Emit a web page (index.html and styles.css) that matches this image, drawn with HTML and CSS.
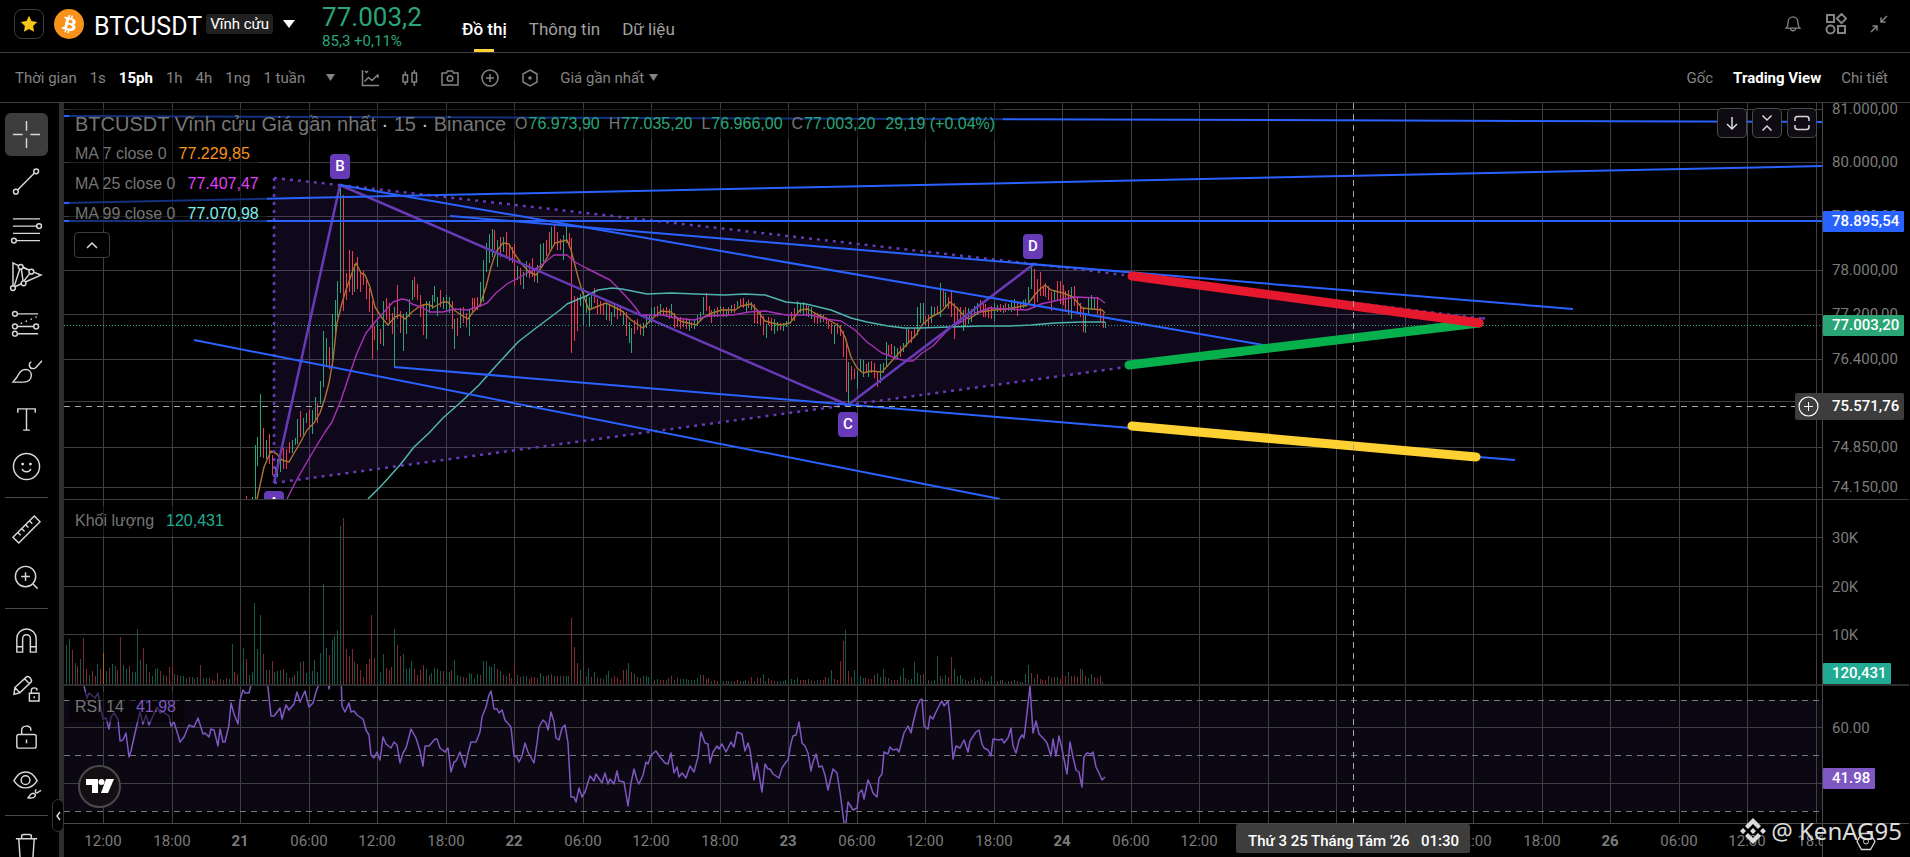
FILE: index.html
```html
<!DOCTYPE html>
<html lang="vi">
<head>
    <meta charset="UTF-8">
    <meta name="viewport" content="width=device-width, initial-scale=1.0">
    <title>BTCUSDT Vĩnh cửu</title>
    <link rel="stylesheet" href="styles.css">
</head>
<body>
    <header class="header">
        <button class="fav" type="button" aria-label="Yêu thích">
            <svg width="18" height="18" viewBox="0 0 18 18"><path d="M9 .8l2.5 5.3 5.7.8-4.1 4.1 1 5.8L9 14l-5.1 2.8 1-5.8L.8 6.9l5.7-.8z" fill="#f5c518"/></svg>
        </button>
        <svg class="coin" width="30" height="30" viewBox="0 0 32 32">
            <circle cx="16" cy="16" r="16" fill="#f7931a"/>
            <path fill="#fff" d="M23.2 14c.3-2.1-1.3-3.2-3.5-4l.7-2.8-1.7-.4-.7 2.8-1.4-.3.7-2.8-1.7-.4-.7 2.8-1.1-.3-2.4-.6-.4 1.9 1.2.3c.7.2.8.6.8 1l-.8 3.2-1.1 4.5c-.1.2-.3.5-.8.4l-1.2-.3-.9 2 3.5.9-.7 2.9 1.7.4.7-2.9 1.4.4-.7 2.8 1.7.4.7-2.8c2.9.6 5.2.3 6.1-2.3.8-2.1 0-3.4-1.6-4.2 1.1-.3 2-1 2.2-2.6zm-3.9 5.5c-.6 2.1-4.1 1-5.3.7l.9-3.8c1.2.3 4.9.9 4.4 3.1zm.5-5.500c-.5 1.900-3.400.9-4.400.7l.9-3.500c1 .2 4 .7 3.500 2.800z"/>
        </svg>
        <h1 class="symbol">BTCUSDT</h1>
        <span class="badge">Vĩnh cửu</span>
        <button class="plain" type="button" aria-label="Chọn cặp">
            <svg width="12" height="8" viewBox="0 0 12 8"><path d="M0 0h12L6 8z" fill="#fff"/></svg>
        </button>
        <div class="quote">
            <div class="last">77.003,2</div>
            <div class="change">85,3 +0,11%</div>
        </div>
        <nav class="tabs">
            <a class="tab active" href="#chart">Đồ thị</a>
            <a class="tab" href="#info">Thông tin</a>
            <a class="tab" href="#data">Dữ liệu</a>
        </nav>
        <div class="header-icons">
            <button class="plain" type="button" aria-label="Thông báo">
                <svg width="18" height="18" viewBox="0 0 20 20" class="gray"><path d="M2.5 14.5h15c-1.500-1.500-2-3-2-6C15.500 4.500 13 2 10 2S4.500 4.500 4.500 8.500c0 3-.5 4.500-2 6zM7 15c.3 1.600 1.400 2.500 3 2.500s2.700-.9 3-2.500"/></svg>
            </button>
            <button class="plain" type="button" aria-label="Bố cục">
                <svg width="22" height="22" viewBox="0 0 22 22" class="gray thick"><path d="M2 2h7v7H2zM13 13h7v7h-7zM16.500 .9l4.600 4.600-4.600 4.600-4.600-4.600z"/><circle cx="5.500" cy="16.500" r="4"/></svg>
            </button>
            <button class="plain" type="button" aria-label="Thu nhỏ">
                <svg width="18" height="18" viewBox="0 0 18 18" class="gray"><path d="M17 1l-6 6M11 2.500V7h4.500M1 17l6-6M7 15.500V11H2.500"/></svg>
            </button>
        </div>
    </header>

    <div class="toolbar">
        <span>Thời gian</span>
        <button class="plain" type="button">1s</button>
        <button class="plain on" type="button">15ph</button>
        <button class="plain" type="button">1h</button>
        <button class="plain" type="button">4h</button>
        <button class="plain" type="button">1ng</button>
        <button class="plain" type="button">1 tuần</button>
        <button class="plain more" type="button" aria-label="Thêm khung giờ">
            <svg width="9" height="7" viewBox="0 0 9 7"><path d="M0 0h9L4.500 7z" fill="#848484"/></svg>
        </button>
        <div class="toolbar-icons">
            <button class="plain" type="button" aria-label="Chỉ báo">
                <svg width="18" height="18" viewBox="0 0 18 18" class="gray"><path d="M1.500 1v15.500H18M3.500 12.500l4-4 3.500 3 6-6M17 9V5.500M4 2l1.500 1.500L7 2"/></svg>
            </button>
            <button class="plain" type="button" aria-label="Kiểu nến">
                <svg width="18" height="18" viewBox="0 0 18 18" class="gray"><path d="M2 6h4.500v7H2zM4.300 2.500V6M4.300 13v3M11 4h4.500v9H11zM13.300 1v3M13.300 13v4"/></svg>
            </button>
            <button class="plain" type="button" aria-label="Chụp ảnh">
                <svg width="18" height="18" viewBox="0 0 18 18" class="gray"><path d="M5.500 4l1-2h5l1 2H17v12H1V4z"/><circle cx="9" cy="9.500" r="2.800"/></svg>
            </button>
            <button class="plain" type="button" aria-label="Thêm">
                <svg width="18" height="18" viewBox="0 0 18 18" class="gray"><circle cx="9" cy="9" r="8"/><path d="M9 5v8M5 9h8"/></svg>
            </button>
            <button class="plain" type="button" aria-label="Cài đặt">
                <svg width="18" height="18" viewBox="0 0 18 18" class="gray"><path d="M9 1l7 4v8l-7 4-7-4V5z"/><circle cx="9" cy="9" r="1" fill="#848484"/></svg>
            </button>
        </div>
        <button class="plain" type="button">Giá gần nhất
            <svg width="9" height="7" viewBox="0 0 9 7"><path d="M0 0h9L4.500 7z" fill="#848484"/></svg>
        </button>
        <div class="views">
            <button class="plain" type="button">Gốc</button>
            <button class="plain on" type="button">Trading View</button>
            <button class="plain" type="button">Chi tiết</button>
        </div>
    </div>

    <main class="workspace">
        <aside class="sidebar">
            <div class="tools tools-draw">
                <button class="tool selected" type="button" aria-label="Con trỏ"><svg viewBox="0 0 30 30"><path d="M15 1v10M15 19v10M1 15h10M19 15h10"/></svg></button>
                <button class="tool" type="button" aria-label="Đường xu hướng"><svg viewBox="0 0 30 30"><path d="M5.800 23.700L23.200 6.300"/><circle cx="4" cy="25.500" r="2.500"/><circle cx="25" cy="4.500" r="2.500"/></svg></button>
                <button class="tool" type="button" aria-label="Fibonacci"><svg viewBox="0 0 30 30"><path d="M1 4h28M1 11.500h24.500M1 19h28M4.500 26.500H29"/><circle cx="28" cy="11.500" r="2.500"/><circle cx="2" cy="26.500" r="2.500"/></svg></button>
                <button class="tool" type="button" aria-label="Mẫu hình"><svg viewBox="0 0 30 30"><path d="M1 26V1l7 3.500 12 5 10 4-18 8-11 5M2 26L8.500 6M9.500 6l2 14M19 11l-7 9M11 5l8 4"/><circle cx="9" cy="5" r="2.500" class="dot"/><circle cx="20" cy="10" r="2.500" class="dot"/><circle cx="12" cy="22" r="2.500" class="dot"/><circle cx="1" cy="27" r="2.500" class="dot"/></svg></button>
                <button class="tool" type="button" aria-label="Dự báo"><svg viewBox="0 0 30 30"><path d="M5.500 4H27M5.500 17h17M5.500 24.500H27"/><path d="M9 14l18-7.500" stroke-dasharray="1.500 4"/><circle cx="3" cy="4" r="2.500"/><circle cx="3" cy="17" r="2.500"/><circle cx="25" cy="17" r="2.500"/><circle cx="3" cy="24.500" r="2.500"/></svg></button>
                <button class="tool" type="button" aria-label="Cọ vẽ"><svg viewBox="0 0 30 30"><path d="M1 26l4-5c2-3 3-8 9-8 4 0 6 3 6 6 0 4-3 7-8 7zM20 5c-3 1-3 7 2 7 1 0 2-.5 3-1.500L31 4"/></svg></button>
                <button class="tool" type="button" aria-label="Văn bản"><svg viewBox="0 0 30 30"><path d="M6 8V4h18v4M15 4v22M11.500 26h7"/></svg></button>
                <button class="tool" type="button" aria-label="Biểu tượng"><svg viewBox="0 0 30 30"><circle cx="15" cy="15" r="13.500"/><path d="M11 12.500h.1M19 12.500h.1" stroke-width="3" stroke-linecap="round"/><path d="M10.500 17.500c1 4 8 4 9 0"/></svg></button>
            </div>
            <hr>
            <div class="tools tools-measure">
                <button class="tool" type="button" aria-label="Thước"><svg viewBox="0 0 30 30"><path d="M1 23L23 1l6 6L7 29zM6 18l3 3M10 14l3 3M14 10l3 3M18 6l3 3"/></svg></button>
                <button class="tool" type="button" aria-label="Phóng to"><svg viewBox="0 0 30 30"><circle cx="14" cy="14" r="10.500"/><path d="M14 9.500v9M9.500 14h9M21.500 21.500l5 5"/></svg></button>
            </div>
            <hr>
            <div class="tools tools-lock">
                <button class="tool" type="button" aria-label="Nam châm"><svg viewBox="0 0 30 30"><path d="M5 27V13a10 10 0 0 1 20 0v14h-6V13a4 4 0 0 0-8 0v14zM5 21.500h6M19 21.500h6"/></svg></button>
                <button class="tool" type="button" aria-label="Giữ chế độ vẽ"><svg viewBox="0 0 30 30"><path d="M2 21l1-7L15 3c2-1.500 6 2 5 5L8 19.500zM13 5l5 5M3 14l5 5.500M18 20h10v8H18zM20 20v-3c0-3.500 6-3.500 6 0M23 23v2"/></svg></button>
                <button class="tool" type="button" aria-label="Khóa"><svg viewBox="0 0 30 30"><rect x="5" y="13" width="20" height="14" rx="2"/><path d="M10 13V8.500c0-5.500 9.500-5.500 9.500-1V9M15 18v4" /></svg></button>
                <button class="tool" type="button" aria-label="Ẩn"><svg viewBox="0 0 30 30"><path d="M2 11C8-1 20-1 26 11 20 21 8 21 2 11z"/><circle cx="14" cy="10.500" r="4.500"/><path d="M16 29c3-1 2-5 6-5 4 1 2 5-2 5zM25 20c-2 2 0 5 2 3l3-2"/></svg></button>
            </div>
            <hr>
            <div class="tools">
                <button class="tool" type="button" aria-label="Xóa"><svg viewBox="0 0 30 30"><path d="M4 6h22M10 6V3c0-1 1-1.500 2-1.500h6c1 0 2 .5 2 1.500v3M7 6l1.500 22h13L23 6"/></svg></button>
            </div>
        </aside>

        <section class="chart" id="chart">
            <svg id="plot" viewBox="64 103 1846 754" role="img" aria-label="BTCUSDT 15"></svg>

            <div class="legend legend-price">
                <div class="row title">
                    <span class="name">BTCUSDT Vĩnh cửu Giá gần nhất <b>·</b> 15 <b>·</b> Binance</span>
                    <span>O<i>76.973,90</i></span>
                    <span>H<i>77.035,20</i></span>
                    <span>L<i>76.966,00</i></span>
                    <span>C<i>77.003,20</i></span>
                    <span><i>29,19 (+0.04%)</i></span>
                </div>
                <div class="row">MA 7 close 0 <span class="ma7">77.229,85</span></div>
                <div class="row">MA 25 close 0 <span class="ma25">77.407,47</span></div>
                <div class="row">MA 99 close 0 <span class="ma99">77.070,98</span></div>
                <button class="fold" type="button" aria-label="Ẩn chú thích"><svg width="12" height="8" viewBox="0 0 12 8"><path d="M1 7l5-5 5 5"/></svg></button>
            </div>
            <div class="legend legend-volume"><div class="row">Khối lượng <span class="vol">120,431</span></div></div>
            <div class="legend legend-rsi"><div class="row">RSI 14 <span class="rsi">41.98</span></div></div>

            <div class="pane-buttons">
                <button type="button" aria-label="Xuống"><svg width="18" height="18" viewBox="0 0 18 18"><path d="M9 3v12M4 10l5 5 5-5"/></svg></button>
                <button type="button" aria-label="Thu gọn"><svg width="18" height="18" viewBox="0 0 18 18"><path d="M4.500 1.500L9 6l4.500-4.500M4.500 16.500L9 12l4.500 4.500"/></svg></button>
                <button type="button" aria-label="Toàn màn hình"><svg width="18" height="18" viewBox="0 0 18 18"><path d="M2 7V5c0-1.500 1-2.500 2.500-2.500h9C15 2.500 16 3.500 16 5v2M2 11v2c0 1.500 1 2.500 2.500 2.500h9c1.500 0 2.500-1 2.500-2.500v-2"/></svg></button>
            </div>

            <a class="tv-logo" href="#tv" aria-label="TradingView">
                <svg width="28" height="15" viewBox="0 0 28 15"><path d="M0 0h12v14H6V6H0z"/><circle cx="15.500" cy="3" r="3"/><path d="M20 0h8l-6 14h-7z"/></svg>
            </a>
            <button class="handle" type="button" aria-label="Ẩn thanh công cụ"><svg width="5" height="10" viewBox="0 0 5 10"><path d="M4 1L1 5l3 4"/></svg></button>
            <div class="watermark">
                <svg width="26" height="26" viewBox="0 0 26 26"><path d="M13 0l8 8-3 3-5-5-5 5-3-3zM13 26l8-8-3-3-5 5-5-5-3 3zM3 10l3 3-3 3-3-3zM23 10l3 3-3 3-3-3zM13 10l3 3-3 3-3-3z"/></svg>
                <span>@ KenAG95</span>
            </div>
        </section>
    </main>

    <script src="chart.js"></script>
</body>
</html>
```

FILE: styles.css
```css
* {
    box-sizing: border-box;
}

body {
    margin: 0;
    height: 100vh;
    display: flex;
    flex-direction: column;
    overflow: hidden;
    background-color: #000;
    color: #848484;
    font-family: Roboto, Arial, sans-serif;
    font-size: 15px;
}

button {
    font: inherit;
    color: inherit;
    cursor: pointer;
}

svg {
    display: block;
}

.plain {
    background: none;
    border: none;
    padding: 0;
    display: flex;
    align-items: center;
    gap: 5px;
}

.gray {
    fill: none;
    stroke: #848484;
    stroke-width: 1.5;
}

.gray.thick {
    stroke-width: 2;
}

/* header */
.header {
    flex: none;
    height: 53px;
    display: flex;
    align-items: stretch;
    padding: 0 22px 0 14px;
    border-bottom: 1px solid #3c3c3c;
}

.header > * {
    align-self: center;
}

.fav {
    width: 30px;
    height: 30px;
    margin: 0 10px 4px 0;
    padding: 0;
    display: flex;
    align-items: center;
    justify-content: center;
    background: none;
    border: 1px solid #3a3a40;
    border-radius: 8px;
}

.coin {
    margin: 0 10px 4px 0;
}

.symbol {
    margin: 0 4px 0 0;
    color: #fff;
    font-size: 25px;
    font-weight: 400;
}

.badge {
    margin: 0 10px 4px 0;
    padding: 0 4px;
    color: #fff;
    background-color: #202020;
    border-radius: 3px;
    line-height: 20px;
}

.header > .plain {
    margin-bottom: 4px;
}

.quote {
    margin-left: 27px;
    width: 112px;
    color: #2aa676;
}

.last {
    font-size: 26px;
    line-height: 30px;
}

.change {
    line-height: 18px;
}

.header .tabs {
    align-self: stretch;
    display: flex;
    gap: 22px;
    margin-left: 28px;
}

.tab {
    position: relative;
    display: flex;
    align-items: center;
    padding-top: 6px;
    color: #a0a0a0;
    font-size: 17px;
    text-decoration: none;
}

.tab.active {
    color: #fff;
    font-weight: 500;
}

.tab.active::after {
    content: "";
    position: absolute;
    left: 50%;
    bottom: 0;
    width: 20px;
    height: 3px;
    margin-left: -10px;
    background-color: #fcd535;
}

.header-icons {
    display: flex;
    align-items: center;
    gap: 23px;
    margin: 0 0 4px auto;
}

/* toolbar */
.toolbar {
    flex: none;
    height: 50px;
    display: flex;
    align-items: center;
    gap: 13px;
    padding: 0 22px 0 15px;
    border-bottom: 1px solid #3c3c3c;
}

.on {
    color: #fff;
    font-weight: 700;
}

.more {
    margin-left: 8px;
}

.toolbar-icons {
    display: flex;
    gap: 22px;
    margin: 0 8px 0 13px;
}

.views {
    display: flex;
    gap: 20px;
    margin-left: auto;
}

/* drawing tools */
.workspace {
    flex: 1;
    min-height: 0;
    display: flex;
}

.sidebar {
    flex: none;
    width: 64px;
    padding: 10px 11px 0 5px;
    border-right: 5px solid #2e2e2e;
    overflow: hidden;
}

.sidebar hr {
    height: 1px;
    margin: 9px 0 10px;
    border: none;
    background-color: #4a4a4a;
}

.tools {
    display: flex;
    flex-direction: column;
    justify-content: space-between;
}

.tools-draw {
    height: 375px;
}

.tools-measure {
    height: 91px;
}

.tools-lock {
    height: 187px;
}

.tool {
    width: 43px;
    height: 43px;
    padding: 0;
    display: flex;
    align-items: center;
    justify-content: center;
    background: none;
    border: none;
    border-radius: 6px;
}

.tool.selected {
    background-color: #3d3d3d;
}

.tool svg {
    width: 29px;
    height: 29px;
    overflow: visible;
    fill: none;
    stroke: #d8d8d8;
    stroke-width: 1.5;
}

.tool .dot {
    fill: #000;
}

/* chart */
.chart {
    position: relative;
    flex: 1;
    min-width: 0;
}

#plot {
    width: 100%;
    height: 100%;
}

#plot text {
    font-family: Roboto, Arial, sans-serif;
    font-size: 15px;
    fill: #7b7b7b;
}

#plot .bold {
    font-weight: 700;
}

#plot .tag {
    fill: #fff;
    font-weight: 500;
}

.legend {
    position: absolute;
    left: 5px;
    font-family: "Liberation Sans", Arial, sans-serif;
    font-size: 16px;
    color: #757575;
}

.legend-price {
    top: 6px;
}

.legend-volume {
    top: 403px;
}

.legend-rsi {
    top: 589px;
}

.row {
    width: fit-content;
    height: 30px;
    padding: 0 8px 0 6px;
    display: flex;
    align-items: center;
    gap: 12px;
    background-color: rgba(0, 0, 0, 0.5);
    white-space: nowrap;
}

.row i {
    margin-left: 1px;
    font-style: normal;
    color: #2aa676;
}

.row.title {
    gap: 9px;
}

.row .name {
    font-size: 20px;
}

.row .name b {
    color: #ccc;
    font-weight: 400;
}

.ma7 {
    color: #f7931a;
}

.ma25 {
    color: #e040fb;
}

.ma99 {
    color: #7df0ee;
}

.vol {
    color: #22ab94;
}

.rsi {
    color: #7e57c2;
}

.fold {
    width: 36px;
    height: 26px;
    margin: 3px 0 0 5px;
    padding: 0;
    display: flex;
    align-items: center;
    justify-content: center;
    background-color: #000;
    border: 1px solid #3d3d3d;
    border-radius: 4px;
}

.fold svg,
.pane-buttons svg,
.handle svg {
    fill: none;
    stroke: #d8d8d8;
    stroke-width: 1.5;
}

.pane-buttons {
    position: absolute;
    top: 5px;
    right: 93px;
    display: flex;
    gap: 5px;
}

.pane-buttons button {
    width: 30px;
    height: 30px;
    padding: 0;
    display: flex;
    align-items: center;
    justify-content: center;
    background-color: #0f0b12;
    border: 1px solid #4a4a4a;
    border-radius: 5px;
}

.tv-logo {
    position: absolute;
    left: 14px;
    bottom: 49px;
    width: 43px;
    height: 43px;
    display: flex;
    align-items: center;
    justify-content: center;
    background-color: #120e12;
    border: 2px solid #4a4a4a;
    border-radius: 50%;
}

.tv-logo svg {
    fill: #fff;
}

.handle {
    position: absolute;
    left: -12px;
    bottom: 25px;
    width: 12px;
    height: 33px;
    padding: 0 0 0 3px;
    background-color: #000;
    border: 1px solid #333;
    border-radius: 6px;
}

.watermark {
    position: absolute;
    right: 8px;
    bottom: 9px;
    display: flex;
    align-items: center;
    gap: 5px;
    color: #dcdcdc;
    font-family: "Noto Sans", sans-serif;
    font-size: 24px;
    line-height: 34px;
}

.watermark svg {
    fill: #dcdcdc;
}
```

FILE: chart.js
```js
const svg = document.getElementById('plot');
const LEFT = 64;
const RIGHT = 1822;
const STEP = 2.855;

function add(tag, attrs, parent, text) {
    const el = document.createElementNS('http://www.w3.org/2000/svg', tag);
    for (const key in attrs) el.setAttribute(key, attrs[key]);
    if (text !== undefined) el.textContent = text;
    (parent || svg).appendChild(el);
    return el;
}

function clipGroup(id, x, y, w, h) {
    const clip = add('clipPath', { id: id });
    add('rect', { x: x, y: y, width: w, height: h }, clip);
    return add('g', { 'clip-path': 'url(#' + id + ')' });
}

function seg(x1, y1, x2, y2, color, width, parent, dash) {
    const attrs = { x1: x1, y1: y1, x2: x2, y2: y2, stroke: color, 'stroke-width': width };
    if (dash) attrs['stroke-dasharray'] = dash;
    return add('line', attrs, parent);
}

function poly(points, color, width, parent) {
    return add('polyline', { points: points, fill: 'none', stroke: color, 'stroke-width': width, 'stroke-linejoin': 'round' }, parent);
}

// high-low of every 15 minute bar
const candles = `r496-499 g499-499 g497-499 g445-499 g437-466 g394-457 r428-458 g440-459 r434-464 r455-475
g467-483 g459-477 g456-472 r448-469 r449-469 r442-453 g440-453 g438-445 g419-444 r411-437
g418-435 g413-423 r410-428 g410-434 g397-421 r403-423 g381-404 g331-387 g338-367 r347-369
g314-367 g300-335 g281-317 g186-293 r195-311 r273-300 r250-292 r251-295 g264-292 r257-289
r271-292 r271-285 r277-299 r288-312 r301-359 r326-340 g321-350 r329-344 g301-346 r298-320
r303-324 r313-334 g307-367 r285-319 r311-333 g314-351 g312-334 g299-317 g280-300 r277-297
r284-300 r295-317 r304-335 g301-339 g301-313 g295-309 g286-302 g297-316 r290-307 g297-309
g295-312 g297-313 r301-329 g319-349 r318-336 g308-328 r307-323 r313-327 g309-336 r298-313
r298-309 r297-310 g282-307 g260-302 g243-272 g234-263 g229-257 r230-250 g240-267 r237-257
g237-252 r232-257 r244-261 r247-263 r244-286 g266-280 r268-285 g272-289 g261-277 r263-278
r258-277 r269-282 g265-283 g244-269 g243-262 r240-256 r232-251 g227-250 r225-245 r232-250
r239-250 g235-260 g225-243 r233-247 r238-353 r296-341 r297-331 g294-306 g288-325 g295-313
g297-327 g294-308 r288-303 r299-314 r301-314 r303-315 g303-320 r304-321 g312-325 g305-317
r307-319 r306-316 g311-325 r312-336 g322-343 g328-353 r320-334 r319-330 r324-335 g323-336
g315-328 g316-323 g308-323 g307-316 r306-317 g304-315 r308-316 r307-317 r309-319 g304-318
r313-328 r317-327 r317-329 r319-327 r318-329 g319-331 r322-328 g320-329 g315-326 g312-320
g297-315 r293-311 r306-317 r310-323 g309-317 r307-317 g306-314 r307-317 g309-317 r307-315
g305-313 r304-313 g301-309 r299-307 r298-308 g302-312 r300-308 g302-310 r304-323 r310-324
r312-326 r316-335 g324-338 r317-325 r318-331 g319-334 g322-331 r323-330 g323-331 g321-327
g316-324 r312-320 r308-321 g301-312 g303-313 g302-315 r305-316 g306-317 g307-319 r313-323
r313-324 g314-323 r315-322 r317-324 r321-329 r323-334 g325-344 r323-334 r325-336 r331-357
r340-392 g362-405 r366-380 r369-379 g371-389 g359-372 g360-377 r364-373 g362-377 r361-373
r363-378 r371-387 g364-383 g363-373 g342-367 r345-355 r344-355 g346-357 g348-358 r346-357
g343-352 g328-347 r329-343 r331-343 r328-338 g307-335 g303-323 g303-324 r316-325 r315-327
g306-323 g307-315 r306-314 g283-317 r290-307 g292-308 r297-309 r290-317 r303-339 r307-323
r307-323 g310-331 r307-327 g308-324 g309-322 g306-316 g303-315 r300-312 r302-317 r304-317
r307-318 r306-319 g303-321 g305-312 r304-312 g305-313 r303-312 g304-311 g300-312 g299-311
r301-316 r302-310 g300-308 g299-307 g287-305 g267-289 r269-308 r279-302 r272-296 r286-296
r283-297 r286-300 r292-311 g290-301 r281-300 r281-304 r285-305 r291-310 r290-315 g287-319
r286-306 r297-314 r303-317 r307-332 g313-333 g297-314 g295-310 g297-310 r297-314 r308-321
r313-328 g322-328`.split(/\s+/);

// volume bars, each run starts at a bar index
const volumes = [
    [0, 'g39 g45 r34 g21 r18 g25 r46 r15 g9 r13 r8 g20 r15 o31 g13 r16 g20 g18 r14 r47 g19 g15 r18 g12 g12 g55 g24 r36 g20 r12 g8 g15 g16 r13 g9 r8 r17 r21 g10 r9'],
    [40, 'g8 g8 g6 r7 g7 r5 g7 r19 g6 g6 r6 r4 r3 r11 g5 r4 r6 g5 g40 r12 r10 g19 g36 r25 g9 g12 g81 g35 g69 r30 g14 r14 r23 g12 g13 g14 r15 g11 r6 g7'],
    [80, 'r9 g13 g22 r23 g11 g12 g13 g24 g12 g31 g100 g36 r29 g44 g48 g54 g158 r166 r35 r28 r35 g22 r20 r14 r7 r20 r25 r69 r26 g26 g12 g30 r16 r14 r17 g55 r39 r28 g30'],
    [119, 'g15 g16 g23 r15 r9 r14 r19 g15 r9 g11 g16 g15 g13 r13 g12 g12 r14 g24 g9 g8 r7 r6 g11 g10 g6 g10 r9 g23 g23 g18 g17 g20 r15 g13 r9 g8 r11'],
    [156, 'r6 r20 g9 r7 g8 g8 r5 r7 r7 r6 g11 g8 r8 g9 r10 g8 r8 g8 r8 g8 g8 r66 r37 r21 g14 r10 g8 g16 r7 g12 r6 g6 r5 g9 g13 r6 r8 r6 r4 r14 r14 g21 r12 g10'],
    [200, 'r7 r6 g8 g8 g7 g7 r4 g5 r4 r4 r4 g6 r8 g4 r6 g5 g5 g5 g4 g4 g4 g6 g9 r9 r5 r6 g3 r4 r3 g3 g3 r3 g3 g3 r3 r4 r3 g3 g4 r3'],
    [240, 'r7 g3 r6 r6 g10 g3 r6 r4 r3 g3 g3 g3 g4 g4 g5 g4 g6 r4 r4 r4 r5 g4 r3 g4 r4 r4 r7 g6 g14 r5 r4 r23 r43 g54 r13 r7 g14 g10 g8 g6'],
    [280, 'r6 r5 r5 r9 g11 g7 g15 r7 g6 r4 r4 r4 g8 g16 r6 g4 g5 g22 g11 g9 r10 g4 r4 g3 g4 g28 r8 g5 g9 r7 r27 g15 g8 g9 g5 r4 g3 r4 g6 g4'],
    [320, 'r6 g4 r3 g3 g8 g4 r3 g4 r4 g2 g3 r3 g4 r3 g2 r2 g10 g19 r11 g6 r10 r5 r4 r4 r8 g6 r7 g7 r5 r8 r8 g12 r8 r8 r7 r15 g14 r8 g6 g10 r7 r6 r8 g2']
];

const ma7 = '257,499 264,467 271,451 277,454 282,460 289,462 293,455 300,443 307,430 314,423 320,413 325,398 329,383 333,360 337,323 342,303 346,290 352,273 356,263 361,273 365,275 370,287 375,307 382,318 388,325 395,317 400,315 405,319 412,312 420,306 427,304 434,307 443,302 448,302 454,310 461,315 468,319 473,312 480,305 486,287 491,267 496,252 503,243 509,244 514,253 521,263 529,272 536,275 543,265 550,252 555,243 567,240 571,250 578,277 584,297 589,310 596,307 606,303 616,308 622,311 631,320 643,328 653,318 661,311 671,312 680,321 696,325 704,317 712,313 722,310 735,310 741,306 751,304 757,310 765,321 780,325 790,323 800,310 808,309 818,315 827,319 839,326 845,337 851,357 857,368 863,373 871,371 882,372 890,363 898,354 908,343 916,335 922,325 931,317 941,312 950,302 957,308 965,317 969,319 980,312 994,310 1006,309 1018,307 1027,305 1037,292 1045,285 1051,290 1063,293 1073,297 1082,308 1092,309 1102,310 1105,313';
const ma25 = '287,499 295,483 304,467 314,450 325,432 332,422 341,400 350,373 357,353 366,333 375,322 384,312 393,302 402,299 407,300 412,304 421,307 430,312 443,312 454,309 468,310 480,306 487,303 496,293 507,284 518,278 529,272 539,267 554,255 567,255 575,262 586,268 598,274 610,280 620,290 631,302 641,315 651,315 663,315 675,318 694,320 708,316 733,315 749,312 765,311 786,315 810,315 826,319 841,321 855,330 867,342 882,353 898,359 908,361 913,361 922,353 933,346 943,335 951,327 961,322 975,313 990,308 1006,309 1027,310 1041,304 1059,300 1075,297 1098,298 1105,303';
const ma99 = '368,499 382,485 400,465 414,447 429,433 443,418 461,402 479,385 495,367 518,342 536,328 560,310 567,304 586,296 598,290 612,288 622,289 647,294 671,293 696,294 724,295 745,294 765,295 786,302 806,304 831,310 851,318 867,322 888,326 904,328 920,328 949,327 982,326 1010,326 1031,325 1055,323 1080,322 1105,322';
const rsi = '84,686 87,698 89,693 95,698 98,693 101,710 103,719 106,718 109,729 111,717 114,713 118,719 120,741 123,740 126,733 129,757 131,751 135,733 140,712 143,724 146,715 149,725 157,707 160,713 163,712 169,716 171,726 174,722 178,735 180,742 184,737 189,725 194,727 198,718 203,734 205,733 209,737 211,729 214,730 218,746 220,729 223,742 225,742 229,725 231,703 234,714 238,724 240,700 243,690 245,693 249,693 251,685 253,675 266,680 268,688 271,716 274,716 278,711 280,708 282,719 286,705 289,710 294,704 297,692 300,702 305,691 309,707 313,703 316,692 319,684 322,670 328,680 329,689 330,680 341,675 342,706 345,712 349,703 351,712 354,711 357,715 363,719 366,730 369,735 371,755 374,758 377,752 380,760 383,737 386,744 391,748 394,742 397,745 400,763 403,753 406,748 409,737 411,729 416,738 420,751 423,766 425,746 429,746 435,739 437,739 440,748 445,752 448,748 451,772 454,762 456,761 460,752 462,758 465,767 468,753 471,742 476,742 480,732 482,717 486,707 489,695 491,691 494,709 497,709 499,713 502,710 505,720 511,727 514,756 517,757 519,762 522,756 525,743 528,752 534,763 537,743 539,727 543,720 546,723 548,730 551,712 554,722 556,738 559,740 562,728 565,725 568,743 571,797 574,797 576,802 579,788 582,797 585,792 590,776 594,781 596,774 602,783 605,773 608,784 610,779 614,784 617,771 619,781 624,782 628,806 631,783 634,769 637,780 639,784 643,775 646,762 648,764 651,755 656,751 660,757 665,763 668,764 671,753 674,773 677,767 679,777 682,773 686,778 690,766 694,772 698,757 701,732 705,743 708,744 710,763 713,752 717,746 719,749 722,744 726,752 731,742 734,747 737,732 742,734 745,751 748,743 750,750 754,780 757,763 762,792 765,764 768,769 770,769 773,774 779,778 782,768 786,762 788,760 791,743 793,736 796,735 799,722 802,743 805,746 808,753 811,771 813,762 816,754 819,767 822,766 825,775 828,790 831,777 833,769 837,773 840,792 844,823 845,830 846,823 848,802 850,805 853,810 857,808 859,793 862,790 864,799 868,780 870,784 873,793 877,797 879,778 882,774 884,752 888,754 890,747 893,750 897,749 899,752 904,733 908,726 911,733 913,723 917,707 920,700 922,699 924,726 928,729 930,716 933,719 936,712 940,704 942,701 944,706 948,701 950,717 953,759 956,746 960,748 964,740 968,752 970,741 976,732 979,730 982,744 984,748 988,750 991,756 993,739 999,740 1002,739 1004,743 1008,738 1011,728 1013,746 1016,753 1019,740 1022,735 1024,738 1027,713 1030,686 1033,733 1036,721 1039,734 1044,739 1047,743 1051,756 1053,739 1056,756 1059,736 1062,749 1067,774 1070,742 1073,757 1076,770 1079,772 1082,787 1084,757 1087,753 1091,754 1093,752 1096,767 1099,773 1102,780 1105,777';

// grid
const times = ['12:00', '18:00', '21', '06:00', '12:00', '18:00', '22', '06:00', '12:00', '18:00', '23', '06:00', '12:00', '18:00', '24', '06:00', '12:00', '18:00', '25', '06:00', '12:00', '18:00', '26', '06:00', '12:00', '18:00'];
const prices = [[109, '81.000,00'], [162, '80.000,00'], [216, '79.000,00'], [270, '78.000,00'], [314, '77.200,00'], [359, '76.400,00'], [401, '75.600,00'], [447, '74.850,00'], [487, '74.150,00']];
const grid = '#3f3f42';

add('rect', { x: LEFT, y: 700, width: RIGHT - LEFT, height: 111, fill: '#0c0813' });
const area = clipGroup('area', LEFT, 103, RIGHT - LEFT, 754);
const crisp = add('g', { 'shape-rendering': 'crispEdges' });
times.forEach(function (label, i) {
    const x = Math.round(103 + i * 68.5);
    seg(x + 0.5, 103, x + 0.5, 823, grid, 1, crisp);
    // labels under the crosshair date are hidden by it
    if (x > 1250 && x < 1450) return;
    const attrs = { x: x, y: 846, 'text-anchor': 'middle' };
    if (label.length === 2) attrs.class = 'bold';
    add('text', attrs, area, label);
});
prices.forEach(function (p) {
    seg(LEFT, p[0] + 0.5, RIGHT, p[0] + 0.5, grid, 1, crisp);
    if (p[0] !== 401) add('text', { x: 1832, y: p[0] + 5 }, svg, p[1]);
});
[[537, '30K'], [586, '20K'], [634, '10K'], [727, '60.00'], [783, '']].forEach(function (p) {
    seg(LEFT, p[0] + 0.5, RIGHT, p[0] + 0.5, grid, 1, crisp);
    if (p[1]) add('text', { x: 1832, y: p[0] + 6 }, svg, p[1]);
});

// price pane
const main = clipGroup('main', LEFT, 103, RIGHT - LEFT, 396);
add('polygon', { points: '274,178 274,483 1486,318', fill: '#673ab7', 'fill-opacity': 0.14 }, main);
candles.forEach(function (c, i) {
    const range = c.slice(1).split('-');
    const x = Math.round(246 + i * STEP) + 0.5;
    seg(x, range[0], x, range[1], c[0] === 'g' ? '#2aa676' : '#f0384f', 1, main);
});
poly(ma7, '#a8752f', 1.4, main);
poly(ma25, '#a832b5', 1.4, main);
poly(ma99, '#4fb3b0', 1.5, main);

const purple = '#673ab7';
poly('274,483 340,185 848,405 1034,264', purple, 2.5, main);
[[274, 178, 274, 483], [274, 178, 340, 185], [340, 185, 1034, 264], [1034, 264, 1486, 319], [274, 483, 848, 405], [848, 405, 1486, 318]].forEach(function (l) {
    seg(l[0], l[1], l[2], l[3], purple, 2.5, main, '3 5');
});
[[64, 116, 1822, 122], [64, 203, 1822, 166], [64, 221, 1822, 221], [340, 185, 1275, 347], [450, 216, 1573, 309], [194, 340, 1000, 499], [394, 367, 1515, 460]].forEach(function (l) {
    seg(l[0], l[1], l[2], l[3], '#2962ff', 2, main);
});
seg(LEFT, 325.5, RIGHT, 325.5, '#2aa676', 1, main, '1 2');

[[1132, 426, 1476, 457, '#fdd132'], [1129, 365, 1479, 323, '#06b04c'], [1132, 276, 1479, 323, '#e6182d']].forEach(function (l) {
    seg(l[0], l[1], l[2], l[3], l[4], 9, main).setAttribute('stroke-linecap', 'round');
});

[['A', 274, 491], ['B', 340, 154], ['C', 848, 412], ['D', 1033, 234]].forEach(function (p) {
    add('rect', { x: p[1] - 10, y: p[2], width: 20, height: 25, rx: 4, fill: purple }, main);
    add('text', { x: p[1], y: p[2] + 17, 'text-anchor': 'middle', class: 'tag' }, main, p[0]);
});

// volume pane
const barColors = { g: '#12594c', r: '#7c2a30', o: '#a8661c' };
volumes.forEach(function (run) {
    run[1].split(' ').forEach(function (v, i) {
        const x = Math.round(66 + (run[0] + i) * STEP) + 0.5;
        seg(x, 684 - v.slice(1), x, 684, barColors[v[0]], 1, svg);
    });
});

// rsi pane
const rsiPane = clipGroup('rsi', LEFT, 686, RIGHT - LEFT, 137);
[700, 755, 811].forEach(function (y) {
    seg(LEFT, y + 0.5, RIGHT, y + 0.5, '#787880', 1, rsiPane, '6 5');
});
poly(rsi, '#7e57c2', 1.5, rsiPane);

// pane borders
seg(LEFT, 499.5, 1909, 499.5, '#3c3c3c', 1, crisp);
seg(LEFT, 685, 1909, 685, '#2e2e2e', 2);
seg(LEFT, 823.5, 1909, 823.5, '#4a4a4a', 1);
seg(1822.5, 103, 1822.5, 857, '#4a4a4a', 1);

// crosshair
seg(LEFT, 406.5, 1795, 406.5, '#a8a8a8', 1, svg, '6 5');
seg(1353.5, 103, 1353.5, 823, '#a8a8a8', 1, svg, '6 5');

// axis tags
[[211, 81, '#2962ff', '78.895,54'], [315, 81, '#2aa676', '77.003,20'], [663, 68, '#22ab94', '120,431'], [768, 52, '#7e57c2', '41.98']].forEach(function (t) {
    add('rect', { x: 1823, y: t[0], width: t[1], height: 21, rx: 1, fill: t[2] });
    add('text', { x: 1832, y: t[0] + 15, class: 'tag' }, svg, t[3]);
});
add('rect', { x: 1795, y: 393, width: 109, height: 27, rx: 2, fill: '#3d3d3d' });
add('circle', { cx: 1808.5, cy: 406.5, r: 9.5, fill: 'none', stroke: '#fff', 'stroke-width': 1.2 });
seg(1804, 406.5, 1813, 406.5, '#fff', 1);
seg(1808.5, 402, 1808.5, 411, '#fff', 1);
add('text', { x: 1832, y: 411, class: 'tag' }, svg, '75.571,76');

add('rect', { x: 1236, y: 824, width: 234, height: 29, rx: 2, fill: '#3d3d3d' });
add('text', { x: 1248, y: 846, class: 'tag' }, svg, "Thứ 3 25 Tháng Tám '26");
add('text', { x: 1459, y: 846, class: 'tag', 'text-anchor': 'end' }, svg, '01:30');

add('path', { d: 'M1861.500 833.500h9l4.500 8-4.500 8h-9l-4.500-8z', fill: 'none', stroke: '#d8d8d8', 'stroke-width': 1.3 });
add('circle', { cx: 1866, cy: 841.5, r: 2.5, fill: 'none', stroke: '#d8d8d8' });
```
